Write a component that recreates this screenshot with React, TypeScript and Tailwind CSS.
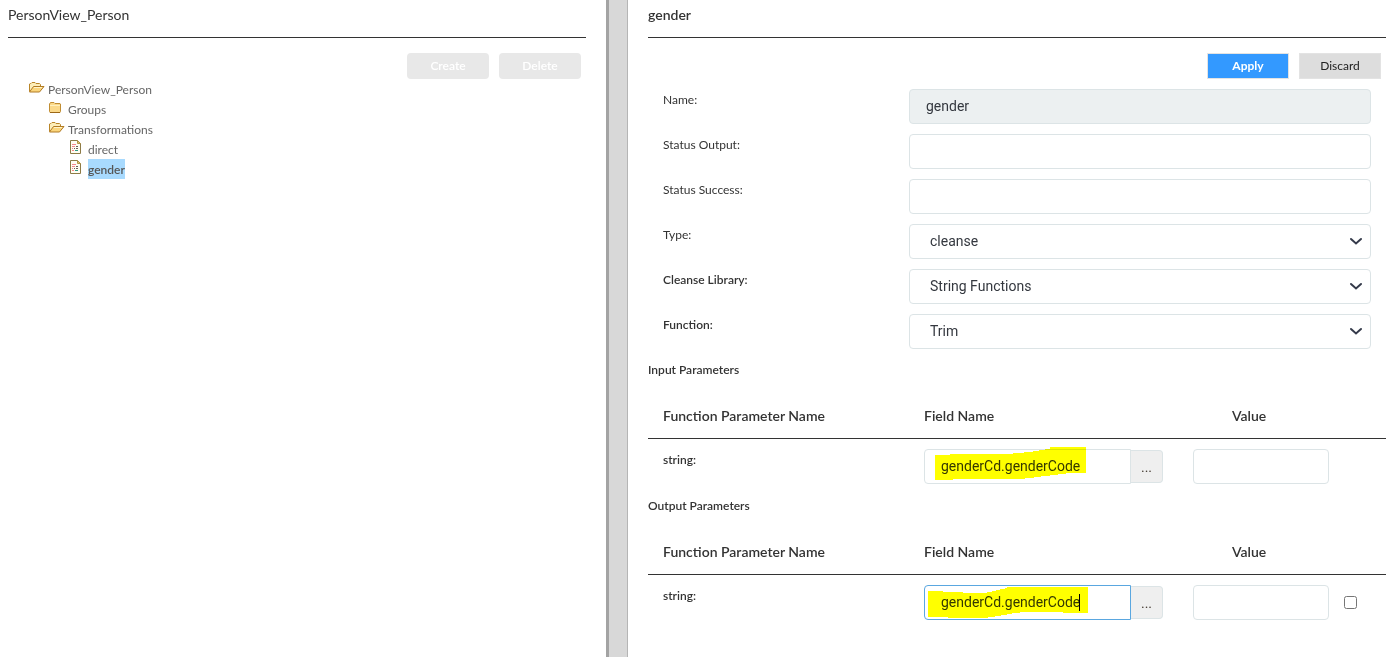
import { useState } from 'react';
import type { ReactNode } from 'react';

const controlClass =
  'block h-[35px] w-full rounded border border-[#dce4e6] bg-white pb-0.5 font-[Roboto,sans-serif] text-sm text-[#34383f] outline-none';

function FolderOpenIcon() {
  return (
    <svg className="ml-px shrink-0" width="16" height="12" viewBox="0 0 16 12" fill="none" aria-hidden="true">
      <path d="M0.5 10.5V3L1.5 2.5H2L3 1.5H6L7 2.5H10.5L11.5 3.5V5.5" fill="#fdeeb9" stroke="#b98528" />
      <path d="M0.5 11L4.5 5.5H15L10.5 11Z" fill="#fbd67c" stroke="#b07a24" />
      <path d="M5 6.5H13" stroke="#fff3c9" />
    </svg>
  );
}

function FolderIcon() {
  return (
    <svg className="ml-px shrink-0" width="16" height="12" viewBox="0 0 16 12" fill="none" aria-hidden="true">
      <path d="M0.5 10.5V3L1.5 1.5H5L6 2.5H11L11.5 3V10.5L11 11.5H1Z" fill="#fbd98a" stroke="#c08d33" />
      <path d="M1 4.5H11" stroke="#fff0bd" />
      <path d="M1 11.5H11" stroke="#9c6716" />
    </svg>
  );
}

function FileIcon() {
  return (
    <svg className="ml-0.5 shrink-0" width="12" height="14" viewBox="0 0 12 14" fill="none" aria-hidden="true">
      <path d="M0.5 0.5H7.5L10.5 3.5V13.5H0.5Z" fill="#fffdf2" stroke="#8d7b47" />
      <path d="M7.5 0.5V3.5H10.5Z" fill="#e3c878" stroke="#b39445" />
      <path d="M2 4.5H6M2 6.5H5M2 8.5H3" stroke="#f8858c" />
      <path d="M6 6.5H8M4 8.5H5M6 8.5H8" stroke="#6b625a" />
      <path d="M2 10.5H4" stroke="#f8858c" />
      <path d="M5 10.5H8" stroke="#2f9a86" />
    </svg>
  );
}

function TreeItem({ icon, label, selected }: { icon: ReactNode; label: string; selected?: boolean }) {
  return (
    <div className="flex h-5 items-center">
      <span className="flex w-5 shrink-0 pb-1">{icon}</span>
      <button
        type="button"
        className={selected ? 'h-5 bg-[#a8dafe] pt-0.5 font-semibold text-[#555]' : 'h-5 pt-0.5'}
      >
        {label}
      </button>
    </div>
  );
}

function Row({ id, label, bold, children }: { id: string; label: string; bold?: boolean; children: ReactNode }) {
  return (
    <div className="mb-2.5 grid grid-cols-3">
      <label
        htmlFor={id}
        className={bold ? 'px-[15px] text-xs leading-[22px] font-semibold' : 'px-[15px] text-xs leading-[22px]'}
      >
        {label}
      </label>
      <div className="relative col-span-2 px-[15px]">{children}</div>
    </div>
  );
}

function SelectRow({ id, label, value, bold }: { id: string; label: string; value: string; bold?: boolean }) {
  return (
    <Row id={id} label={label} bold={bold}>
      <select id={id} className={`${controlClass} appearance-none px-5`}>
        <option>{value}</option>
      </select>
      <svg
        className="pointer-events-none absolute top-[13px] right-[23px]"
        width="14"
        height="9"
        viewBox="0 0 14 9"
        fill="none"
        aria-hidden="true"
      >
        <path d="M2 2L7 6.5L12 2" stroke="#343a4a" strokeWidth="2" strokeLinecap="round" />
      </svg>
    </Row>
  );
}

interface ParameterSectionProps {
  id: string;
  title: string;
  highlight: string;
  active?: boolean;
}

function ParameterSection({ id, title, highlight, active }: ParameterSectionProps) {
  const [field, setField] = useState('genderCd.genderCode');

  return (
    <section>
      <h2 className="text-xs leading-[22px] font-semibold">{title}</h2>
      <table className="w-full table-fixed border-collapse text-left">
        <colgroup>
          <col className="w-[261px]" />
          <col className="w-[269px]" />
          <col className="w-[166px]" />
          <col className="w-[42px]" />
        </colgroup>
        <thead>
          <tr className="border-b border-[#333] text-sm leading-5">
            <th className="px-[15px] pt-[25px] pb-3 font-semibold">Function Parameter Name</th>
            <th className="px-[15px] pt-[25px] pb-3 font-semibold">Field Name</th>
            <th className="pt-[25px] pb-3 pl-[54px] font-semibold">Value</th>
            <td />
          </tr>
        </thead>
        <tbody>
          <tr className="align-top">
            <td className="px-[15px] pt-2.5">
              <label htmlFor={`${id}-field`} className="block text-xs leading-[22px] font-semibold">
                string:
              </label>
            </td>
            <td className="px-[15px] pt-2.5 pb-[11px]">
              <div className="flex items-center">
                <div className="relative flex-1">
                  <input
                    id={`${id}-field`}
                    type="text"
                    value={field}
                    onChange={(e) => setField(e.target.value)}
                    className={
                      active
                        ? 'block h-[35px] w-full rounded-l border border-[#5aa7e0] bg-white px-4 pb-0.5 font-[Roboto,sans-serif] text-sm text-[#34383f] outline-none'
                        : 'block h-[35px] w-full rounded-l border border-[#dce4e6] bg-white px-4 pb-0.5 font-[Roboto,sans-serif] text-sm text-[#34383f] outline-none'
                    }
                  />
                  {/* Marker stroke over the field value */}
                  <svg
                    className="pointer-events-none absolute top-0 left-0 overflow-visible mix-blend-multiply"
                    width="207"
                    height="35"
                    viewBox="0 0 207 35"
                    aria-hidden="true"
                  >
                    <path d={highlight} fill="#ffff00" />
                  </svg>
                  {active && <span className="absolute top-[9px] left-[155px] h-[17px] w-px bg-black" />}
                </div>
                <button
                  type="button"
                  className="h-[33px] w-8 rounded-r border border-l-0 border-[#dce4e6] bg-[#efefef] font-[Roboto,sans-serif] text-sm text-[#4a4038]"
                >
                  ...
                </button>
              </div>
            </td>
            <td className="px-[15px] pt-2.5">
              <input type="text" aria-label={`${title} value`} className={`${controlClass} px-4`} />
            </td>
            <td className="pt-[21px]">
              {active && <input type="checkbox" aria-label="Use value" className="block size-[13px]" />}
            </td>
          </tr>
        </tbody>
      </table>
    </section>
  );
}

export default function App() {
  return (
    <div className="grid min-h-screen grid-cols-[606fr_22px_761fr] bg-white font-[Lato,sans-serif] text-[#333]">
      {/* Tree */}
      <aside className="pr-5 pl-2">
        <h1 className="h-[38px] border-b border-[#333] pt-[5px] text-sm leading-5">PersonView_Person</h1>
        <div className="flex justify-end gap-2.5 pt-[15px] pr-[5px]">
          <button type="button" disabled className="h-[26px] w-[82px] rounded-sm bg-[#e8e8e8] text-xs font-semibold text-white">
            Create
          </button>
          <button type="button" disabled className="h-[26px] w-[82px] rounded-sm bg-[#e8e8e8] text-xs font-semibold text-white">
            Delete
          </button>
        </div>
        <nav className="pl-5 text-xs text-[#666]">
          <TreeItem icon={<FolderOpenIcon />} label="PersonView_Person" />
          <div className="pl-5">
            <TreeItem icon={<FolderIcon />} label="Groups" />
            <TreeItem icon={<FolderOpenIcon />} label="Transformations" />
            <div className="pl-5">
              <TreeItem icon={<FileIcon />} label="direct" />
              <TreeItem icon={<FileIcon />} label="gender" selected />
            </div>
          </div>
        </nav>
      </aside>

      {/* Splitter */}
      <div className="border-r border-l-3 border-r-[#b5b5b5] border-l-[#a3a3a3] bg-[#d8d8d8]" />

      {/* Details */}
      <main className="pr-[3px] pl-5">
        <h1 className="h-[38px] border-b border-[#333] pt-[5px] text-sm leading-5 font-semibold">gender</h1>
        <div className="flex justify-end gap-2.5 pt-[15px] pr-[5px] pb-2.5">
          <button type="button" className="h-[26px] w-[82px] border border-[#e3e3e3] bg-[#3399ff] text-xs font-bold text-white">
            Apply
          </button>
          <button type="button" className="h-[26px] w-[82px] border border-[#e3e3e3] bg-[#dddddd] text-xs text-[#222]">
            Discard
          </button>
        </div>
        <Row id="name" label="Name:">
          <input
            id="name"
            type="text"
            readOnly
            value="gender"
            className="block h-[35px] w-full rounded border border-[#dce4e6] bg-[#ecf0f1] px-4 pb-0.5 font-[Roboto,sans-serif] text-sm text-[#34383f] outline-none"
          />
        </Row>
        <Row id="status-output" label="Status Output:">
          <input id="status-output" type="text" className={`${controlClass} px-4`} />
        </Row>
        <Row id="status-success" label="Status Success:">
          <input id="status-success" type="text" className={`${controlClass} px-4`} />
        </Row>
        <SelectRow id="type" label="Type:" value="cleanse" />
        <SelectRow id="library" label="Cleanse Library:" value="String Functions" bold />
        <SelectRow id="function" label="Function:" value="Trim" bold />

        <ParameterSection
          id="input"
          title="Input Parameters"
          highlight="M11 6H26V5H89V4H100V3H109V2H115V1H121V0H126V-2H162V24H142V25H134V26H126V27H117V28H110V29H101V30H29V31H11Z"
        />
        <ParameterSection
          id="output"
          title="Output Parameters"
          highlight="M4 6H19V7H39V8H63V7H68V6H72V5H76V4H81V3H83V2H164V28H139V27H96V28H88V29H83V30H77V31H71V32H64V33H24V32H4Z"
          active
        />
      </main>
    </div>
  );
}
